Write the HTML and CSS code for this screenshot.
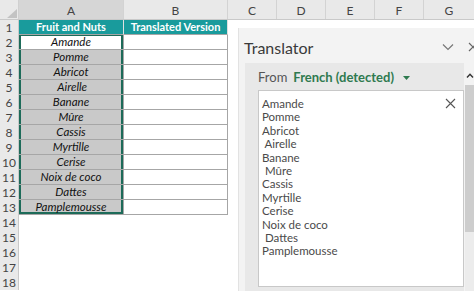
FILE: index.html
```html
<!DOCTYPE html>
<html lang="en">
<head>
    <meta charset="UTF-8">
    <title>Translator - Fruit and Nuts</title>
    <link rel="stylesheet" href="styles.css">
</head>
<body>

<!-- column letters -->
<div class="colhead">
    <div class="corner">
        <svg width="19" height="20" viewBox="0 0 19 20"><polygon points="7,18 17,18 17,9" fill="#c3c3c3"/></svg>
    </div>
    <div class="ch col-a selected">A</div>
    <div class="ch col-b">B</div>
    <div class="ch col-n">C</div>
    <div class="ch col-n">D</div>
    <div class="ch col-n">E</div>
    <div class="ch col-n">F</div>
    <div class="ch col-n last">G</div>
</div>

<div class="main">
    <div class="sheet">
        <div class="row">
            <div class="rh">1</div>
            <div class="cell head">Fruit and Nuts</div>
            <div class="cell head">Translated Version</div>
        </div>
        <div class="row">
            <div class="rh">2</div>
            <div class="cell fruit active first">Amande</div>
            <div class="cell"></div>
        </div>
        <div class="row">
            <div class="rh">3</div>
            <div class="cell fruit">Pomme</div>
            <div class="cell"></div>
        </div>
        <div class="row">
            <div class="rh">4</div>
            <div class="cell fruit">Abricot</div>
            <div class="cell"></div>
        </div>
        <div class="row">
            <div class="rh">5</div>
            <div class="cell fruit">&nbsp;Airelle</div>
            <div class="cell"></div>
        </div>
        <div class="row">
            <div class="rh">6</div>
            <div class="cell fruit">Banane</div>
            <div class="cell"></div>
        </div>
        <div class="row">
            <div class="rh">7</div>
            <div class="cell fruit">Mûre</div>
            <div class="cell"></div>
        </div>
        <div class="row">
            <div class="rh">8</div>
            <div class="cell fruit">Cassis</div>
            <div class="cell"></div>
        </div>
        <div class="row">
            <div class="rh">9</div>
            <div class="cell fruit">Myrtille</div>
            <div class="cell"></div>
        </div>
        <div class="row">
            <div class="rh">10</div>
            <div class="cell fruit">Cerise</div>
            <div class="cell"></div>
        </div>
        <div class="row">
            <div class="rh">11</div>
            <div class="cell fruit">Noix de coco</div>
            <div class="cell"></div>
        </div>
        <div class="row">
            <div class="rh">12</div>
            <div class="cell fruit">Dattes</div>
            <div class="cell"></div>
        </div>
        <div class="row">
            <div class="rh">13</div>
            <div class="cell fruit last">Pamplemousse</div>
            <div class="cell"></div>
        </div>
        <div class="row empty"><div class="rh">14</div></div>
        <div class="row empty"><div class="rh">15</div></div>
        <div class="row empty"><div class="rh">16</div></div>
        <div class="row empty"><div class="rh">17</div></div>
        <div class="row empty"><div class="rh">18</div></div>
    </div>

    <!-- Translator task pane -->
    <div class="side">
        <aside class="pane">
            <div class="pane-title">
                <span class="title">Translator</span>
                <svg class="icon-chev" width="12" height="8" viewBox="0 0 12 8"><polyline points="1,1.5 6,6.5 11,1.5" fill="none" stroke="#777" stroke-width="1.2"/></svg>
                <svg class="icon-close" width="10" height="10" viewBox="0 0 10 10"><path d="M1 1 L9 9 M9 1 L1 9" stroke="#666" stroke-width="1.2"/></svg>
            </div>
            <div class="pane-body">
                <div class="from">
                    <div class="from-row">
                        <span class="from-label">From</span>
                        <span class="lang">French (detected)</span>
                        <svg class="caret" width="7" height="4" viewBox="0 0 7 4"><polygon points="0,0 7,0 3.5,4" fill="#2f7a4f"/></svg>
                    </div>
                    <div class="textbox">
                        <svg class="clear" width="11" height="11" viewBox="0 0 11 11"><path d="M1 1 L10 10 M10 1 L1 10" stroke="#555" stroke-width="1.1"/></svg>
                        <div class="line">Amande</div>
                        <div class="line">Pomme</div>
                        <div class="line">Abricot</div>
                        <div class="line">&nbsp;Airelle</div>
                        <div class="line">Banane</div>
                        <div class="line">&nbsp;Mûre</div>
                        <div class="line">Cassis</div>
                        <div class="line">Myrtille</div>
                        <div class="line">Cerise</div>
                        <div class="line">Noix de coco</div>
                        <div class="line">&nbsp;Dattes</div>
                        <div class="line">Pamplemousse</div>
                    </div>
                </div>
                <div class="scrollbar">
                    <div class="arrow">
                        <svg width="8" height="5" viewBox="0 0 8 5"><polyline points="1,4.5 4,1.2 7,4.5" fill="none" stroke="#333" stroke-width="1.4"/></svg>
                    </div>
                    <div class="track"><div class="thumb"></div></div>
                </div>
            </div>
        </aside>
    </div>
</div>

</body>
</html>
```

FILE: styles.css
```css
body {
    margin: 0;
    width: 474px;
    height: 291px;
    overflow: hidden;
    background-color: #fff;
    font-family: Lato, "Liberation Sans", sans-serif;
    color: #333;
}

/* column header strip */
.colhead {
    display: flex;
    height: 20px;
    background-color: #e9e9e9;
    border-bottom: 1px solid #c9c9c9;
    box-sizing: border-box;
}

.corner {
    width: 19px;
    border-right: 1px solid #d0d0d0;
    box-sizing: border-box;
}

.corner svg {
    display: block;
}

.ch {
    font-size: 12px;
    color: #444;
    text-align: center;
    line-height: 21px;
    border-right: 1px solid #d3d3d3;
    box-sizing: border-box;
}

.ch.selected {
    background-color: #d6d6d6;
}

.col-a { width: 105px; }
.col-b { width: 104px; }
.col-n { width: 49px; }
.ch.last { border-right: none; flex: 1; }

.main {
    display: flex;
}

/* the sheet */
.sheet {
    width: 238px;
    flex-shrink: 0;
}

.row {
    display: grid;
    grid-template-columns: 19px 105px 104px;
    height: 15px;
}

.rh {
    background-color: #e9e9e9;
    border-right: 1px solid #c9c9c9;
    box-sizing: border-box;
    font-size: 12px;
    color: #444;
    text-align: center;
    line-height: 15px;
}

.cell {
    border-right: 1px solid #a6a6a6;
    border-bottom: 1px solid #a6a6a6;
    box-sizing: border-box;
    font-size: 11px;
    line-height: 14px;
    text-align: center;
    white-space: nowrap;
}

.cell.head {
    background-color: #199b9c;
    color: #fff;
    font-weight: bold;
    border-right-color: #e0e0e0;
}

.cell.fruit {
    background-color: #c9c9c9;
    font-style: italic;
    font-size: 11.5px;
    color: #111;
    box-shadow: inset 2px 0 0 #1d6b59, inset -2px 0 0 #1d6b59;
}

.cell.fruit.active {
    background-color: #fff;
}

.cell.fruit.first {
    box-shadow: inset 2px 0 0 #1d6b59, inset -2px 0 0 #1d6b59, inset 0 1px 0 #1d6b59;
}

.cell.fruit.last {
    box-shadow: inset 2px 0 0 #1d6b59, inset -2px 0 0 #1d6b59, inset 0 -2px 0 #1d6b59;
}

/* Translator pane */
.side {
    flex: 1;
    padding-top: 8px;
}

.pane {
    height: 263px;
    background-color: #f3f3f3;
    border-left: 1px solid #e2e2e2;
    font-family: Lato, "Noto Sans", sans-serif;
}

.pane-title {
    display: flex;
    align-items: center;
    height: 35px;
    padding-left: 5px;
}

.title {
    font-size: 16px;
    color: #3a3a3a;
    flex: 1;
    padding-top: 3px;
}

.icon-chev {
    margin-right: 14px;
    margin-top: 2px;
}

.icon-close {
    margin-right: -4px;
    margin-top: 2px;
}

.pane-body {
    display: flex;
    height: 228px;
}

.from {
    margin-left: 6px;
    width: 206px;
    padding-left: 13px;
    background-color: #e8e8e8;
}

.from-row {
    display: flex;
    align-items: center;
    height: 27px;
    font-size: 13px;
}

.from-label {
    color: #555;
    margin-right: 6px;
}

.lang {
    color: #2f7a4f;
    font-weight: bold;
}

.caret {
    margin-left: 9px;
    margin-top: 2px;
}

.textbox {
    position: relative;
    height: 197px;
    background-color: #fff;
    border: 1px solid #c8c8c8;
    box-sizing: border-box;
    padding: 6px 0 0 3px;
}

.line {
    font-size: 11.5px;
    line-height: 13.4px;
    color: #4a4a4a;
    white-space: pre;
}

.clear {
    position: absolute;
    top: 7px;
    right: 7px;
}

.scrollbar {
    width: 9px;
    margin-left: 1px;
    display: flex;
    flex-direction: column;
}

.arrow {
    height: 22px;
    display: flex;
    align-items: center;
    justify-content: center;
    padding-top: 3px;
    box-sizing: border-box;
}

.track {
    flex: 1;
    background-color: #ececec;
}

.thumb {
    height: 147px;
    background-color: #cdcdcd;
}
```
